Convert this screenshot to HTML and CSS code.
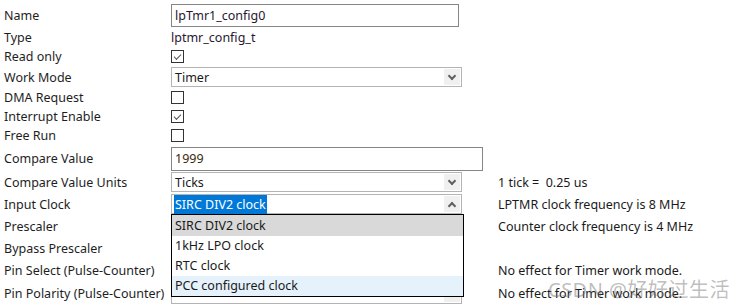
FILE: index.html
```html
<!DOCTYPE html>
<html lang="en">
<head>
    <meta charset="UTF-8">
    <title>lpTmr1_config0</title>
    <link rel="stylesheet" href="styles.css">
</head>
<body>
    <div class="form">
        <!-- Name -->
        <div class="label r-name">Name</div>
        <div class="value r-name"><div class="textbox">lpTmr1_config0</div></div>
        <div class="info r-name"></div>

        <div class="label r-type">Type</div>
        <div class="value r-type"><span class="plain">lptmr_config_t</span></div>
        <div class="info r-type"></div>

        <div class="label r-chk">Read only</div>
        <div class="value r-chk"><span class="check on"></span></div>
        <div class="info r-chk"></div>

        <div class="label r-sel">Work Mode</div>
        <div class="value r-sel">
            <div class="select">
                <span class="sel-text">Timer</span>
                <span class="arrow down"></span>
            </div>
        </div>
        <div class="info r-sel"></div>

        <div class="label r-chk">DMA Request</div>
        <div class="value r-chk"><span class="check"></span></div>
        <div class="info r-chk"></div>

        <div class="label r-chk">Interrupt Enable</div>
        <div class="value r-chk"><span class="check on"></span></div>
        <div class="info r-chk"></div>

        <div class="label r-chk">Free Run</div>
        <div class="value r-chk"><span class="check"></span></div>
        <div class="info r-chk"></div>

        <div class="label r-cmp">Compare Value</div>
        <div class="value r-cmp"><div class="textbox wide">1999</div></div>
        <div class="info r-cmp"></div>

        <div class="label r-sel">Compare Value Units</div>
        <div class="value r-sel">
            <div class="select">
                <span class="sel-text">Ticks</span>
                <span class="arrow down"></span>
            </div>
        </div>
        <div class="info r-sel">1 tick =&nbsp; 0.25 us</div>

        <div class="label r-sel">Input Clock</div>
        <div class="value r-sel">
            <div class="select open">
                <span class="sel-text"><span class="picked">SIRC DIV2 clock</span></span>
                <span class="arrow up"></span>
                <!-- opened list -->
                <ul class="dropdown">
                    <li class="current">SIRC DIV2 clock</li>
                    <li>1kHz LPO clock</li>
                    <li>RTC clock</li>
                    <li class="hover">PCC configured clock</li>
                </ul>
            </div>
        </div>
        <div class="info r-sel">LPTMR clock frequency is 8 MHz</div>

        <!-- the rows below are covered by the open list -->
        <div class="label r-sel">Prescaler</div>
        <div class="value r-sel">
            <div class="select">
                <span class="sel-text"></span>
                <span class="arrow down"></span>
            </div>
        </div>
        <div class="info r-sel">Counter clock frequency is 4 MHz</div>

        <div class="label r-sel">Bypass Prescaler</div>
        <div class="value r-sel"><span class="check"></span></div>
        <div class="info r-sel"></div>

        <div class="label r-sel">Pin Select (Pulse-Counter)</div>
        <div class="value r-sel">
            <div class="select">
                <span class="sel-text"></span>
                <span class="arrow down"></span>
            </div>
        </div>
        <div class="info r-sel">No effect for Timer work mode.</div>

        <div class="label r-last">Pin Polarity (Pulse-Counter)</div>
        <div class="value r-last">
            <div class="select">
                <span class="sel-text"></span>
                <span class="arrow down"></span>
            </div>
        </div>
        <div class="info r-last">No effect for Timer work mode.</div>
    </div>

    <div class="watermark">CSDN @好好过生活</div>
</body>
</html>
```

FILE: styles.css
```css
* {
    margin: 0;
    padding: 0;
    box-sizing: border-box;
}

body {
    width: 744px;
    height: 304px;
    overflow: hidden;
    background: #fff;
    color: #1a1a1a;
    font-family: 'Noto Sans', 'Noto Sans CJK SC', sans-serif;
    font-size: 12.5px;
    position: relative;
}

.form {
    display: grid;
    grid-template-columns: 167px 327px auto;
    padding-left: 4px;
}

.label,
.value,
.info {
    display: flex;
    align-items: center;
    white-space: nowrap;
}

/* row heights */
.r-name { height: 27px; padding-top: 3px; }
.r-type { height: 20px; }
.r-chk { height: 19px; }
.r-cmp { height: 26px; padding-top: 1px; }
.r-sel { height: 22px; }
.r-last { height: 23px; padding-top: 2px; }

.label {
    color: #1e1e1e;
}

.textbox {
    width: 288px;
    height: 23px;
    border: 1px solid #858585;
    padding-left: 3px;
    display: flex;
    align-items: center;
    color: #2a1630;
}

.textbox.wide {
    width: 312px;
    height: 24px;
    color: #3a2a10;
}

.plain {
    color: #2a1630;
}

.check {
    width: 13px;
    height: 13px;
    border: 1px solid #333;
    background: #fff;
    position: relative;
}

.check.on::after {
    content: '';
    position: absolute;
    left: 3px;
    top: 1px;
    width: 6px;
    height: 3px;
    border-left: 1px solid #555;
    border-bottom: 1px solid #555;
    transform: translate(-1px, 2px) rotate(-45deg);
    transform-origin: center;
}

.select {
    width: 291px;
    height: 20px;
    border: 1px solid #b4b4b4;
    display: flex;
    align-items: center;
    justify-content: space-between;
    padding-left: 2px;
    padding-right: 1px;
    position: relative;
    background: #fff;
}

.sel-text {
    padding-left: 1px;
}

.picked {
    background: #0078d7;
    color: #fff;
    padding: 1px 1px 2px;
    margin-left: -1px;
}

.arrow {
    width: 16px;
    height: 16px;
    background: #f0f0f0;
    position: relative;
}

.arrow::after {
    content: '';
    position: absolute;
    left: 5px;
    width: 4px;
    height: 4px;
    border-right: 2px solid #606060;
    border-bottom: 2px solid #606060;
}

.arrow.down::after {
    top: 4px;
    transform: rotate(45deg);
}

.arrow.up::after {
    top: 7px;
    transform: rotate(-135deg);
}

.dropdown {
    list-style: none;
    position: absolute;
    top: 19px;
    left: -1px;
    width: 293px;
    border: 1px solid #000;
    background: #fff;
    z-index: 2;
}

.dropdown li {
    height: 20px;
    line-height: 20px;
    padding-left: 3px;
}

.dropdown li.current {
    background: #d9d9d9;
    height: 21px;
    line-height: 21px;
}

.dropdown li.hover {
    background: #e5f1fb;
}

.info {
    color: #1a1a1a;
}

.watermark {
    position: absolute;
    left: 548px;
    top: 274px;
    font-size: 20px;
    color: rgba(110, 110, 110, 0.45);
    letter-spacing: 0.5px;
    pointer-events: none;
}
```
